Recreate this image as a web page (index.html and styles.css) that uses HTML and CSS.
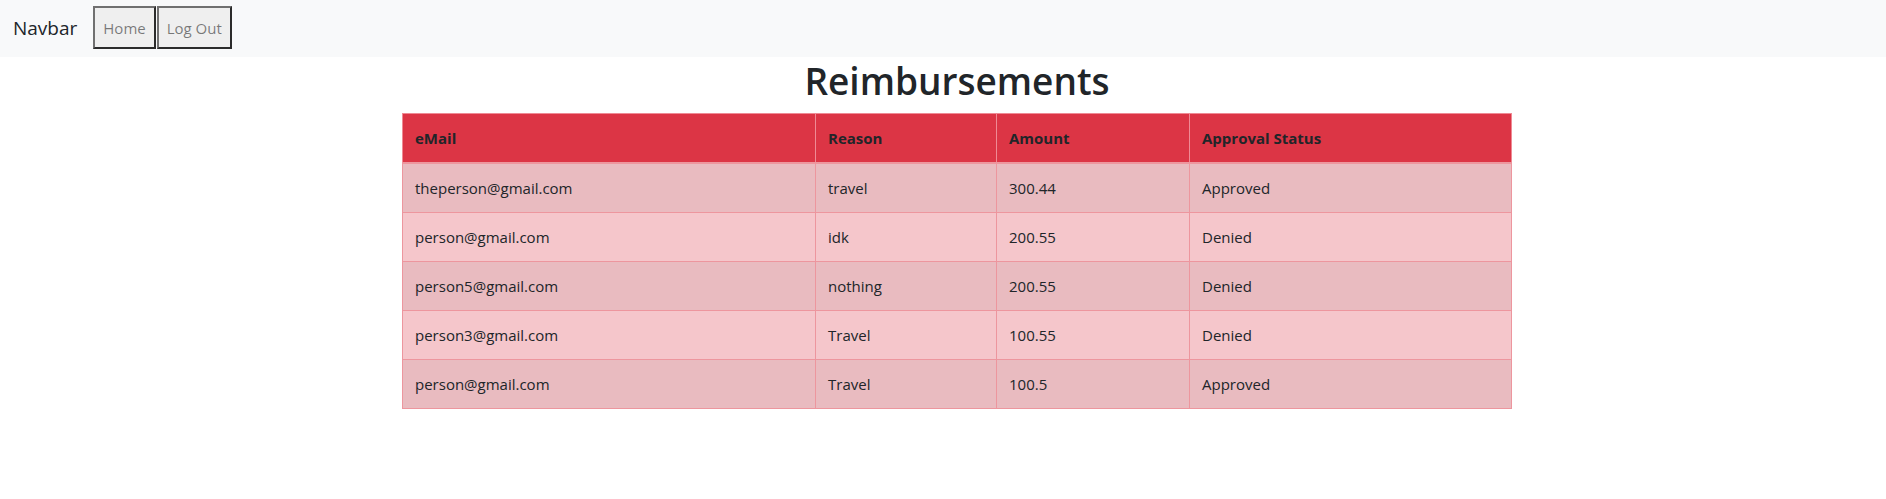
FILE: index.html
```html
<!DOCTYPE html>
<html lang="en">
<head>
  <meta charset="UTF-8" />
  <title>Reimbursements</title>
  <meta name="viewport" content="width=device-width, initial-scale=1.0" />
  <link rel="stylesheet" href="styles.css">
</head>
<body>

  <nav class="navbar">
    <span class="brand">Navbar</span>
    <button class="nav-btn"><span class="nav-link">Home</span></button>
    <button class="nav-btn"><span class="nav-link">Log Out</span></button>
  </nav>

  <div class="container">
    <h1>Reimbursements</h1>

    <table class="table">
      <thead>
        <tr>
          <th class="col-email">eMail</th>
          <th class="col-reason">Reason</th>
          <th class="col-amount">Amount</th>
          <th>Approval Status</th>
        </tr>
      </thead>
      <tbody>
        <tr>
          <td>theperson@gmail.com</td>
          <td>travel</td>
          <td>300.44</td>
          <td>Approved</td>
        </tr>
        <tr>
          <td>person@gmail.com</td>
          <td>idk</td>
          <td>200.55</td>
          <td>Denied</td>
        </tr>
        <tr>
          <td>person5@gmail.com</td>
          <td>nothing</td>
          <td>200.55</td>
          <td>Denied</td>
        </tr>
        <tr>
          <td>person3@gmail.com</td>
          <td>Travel</td>
          <td>100.55</td>
          <td>Denied</td>
        </tr>
        <tr>
          <td>person@gmail.com</td>
          <td>Travel</td>
          <td>100.5</td>
          <td>Approved</td>
        </tr>
      </tbody>
    </table>
  </div>

</body>
</html>
```

FILE: styles.css
```css
/* Reset & base */
* {
  box-sizing: border-box;
}
html, body {
  margin: 0;
  padding: 0;
  font-family: 'Open Sans', 'Noto Sans', sans-serif;
  font-size: 15px;
  line-height: 24px;
  color: #212529;
  background: #fff;
}

/* Top navbar */
.navbar {
  display: flex;
  align-items: center;
  height: 57px;
  padding: 0 0 2px 13px;
  background: #f8f9fa;
}

.brand {
  font-size: 19px;
  line-height: 30px;
  margin-right: 16px;
  color: #212529;
}

.nav-btn {
  height: 43px;
  padding: 0;
  margin: 0 1px 0 0;
  background: #efefef;
  border: 2px solid;
  border-color: #707070 #2b2b2b #2b2b2b #707070;
  font-family: inherit;
  font-size: 15px;
}

.nav-link {
  display: block;
  padding: 8px 8px;
  color: rgba(0, 0, 0, 0.5);
}

/* Main content */
.container {
  width: 1138px;
  margin: 0 auto;
  padding-left: 28px;
}

h1 {
  margin: 0 0 8px;
  font-size: 37px;
  line-height: 48px;
  font-weight: 600;
  text-align: center;
}

/* Table */
.table {
  width: 1110px;
  border-collapse: collapse;
  background: #f5c6cb;
}

.table th,
.table td {
  padding: 12px 12px;
  border: 1px solid #ed969e;
  text-align: left;
  vertical-align: top;
}

.table thead th {
  background: #dc3545;
  border-color: #ef8a94;
  border-bottom: 2px solid #ed969e;
  font-weight: 700;
}

.table tbody tr:nth-child(odd) {
  background: #e9bbc0;
}

.col-email { width: 413px; }
.col-reason { width: 181px; }
.col-amount { width: 193px; }
```
